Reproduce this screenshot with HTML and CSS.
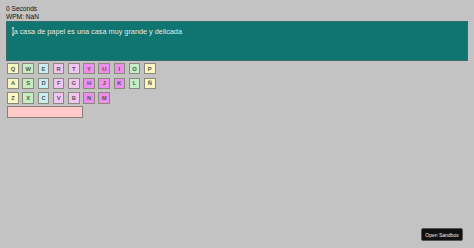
FILE: index.html
```html
<!DOCTYPE html>
<html>
<head>
<meta charset="utf-8">
<link rel="stylesheet" href="styles.css">
</head>
<body>
<div class="stats">
  <div>0 Seconds</div>
  <div>WPM: NaN</div>
</div>
<div class="text-box"><span class="cursor">l</span>a casa de papel es una casa muy grande y delicada</div>
<div class="keyboard">
  <div class="row">
    <div class="key pinky">Q</div><div class="key ring">W</div><div class="key middle">E</div><div class="key index-l">R</div><div class="key index-l">T</div><div class="key index-r">Y</div><div class="key index-r">U</div><div class="key index-r">I</div><div class="key ring-r">O</div><div class="key pinky">P</div>
  </div>
  <div class="row">
    <div class="key pinky">A</div><div class="key ring">S</div><div class="key middle">D</div><div class="key index-l">F</div><div class="key index-l">G</div><div class="key index-r">H</div><div class="key index-r">J</div><div class="key index-r">K</div><div class="key ring-r">L</div><div class="key pinky">Ñ</div>
  </div>
  <div class="row">
    <div class="key pinky">Z</div><div class="key ring">X</div><div class="key middle">C</div><div class="key index-l">V</div><div class="key index-l">B</div><div class="key index-r">N</div><div class="key index-r">M</div>
  </div>
  <div class="input-bar"></div>
</div>
<div class="sandbox-btn">Open Sandbox</div>
</body>
</html>
```
FILE: styles.css
```css
html, body {
  background: #c3c3c3;
}
body {
  margin: 5px 6px;
  font-family: "Liberation Sans", Arial, sans-serif;
  font-size: 6.6px;
  color: #111;
}
.stats {
  line-height: 8px;
}
.text-box {
  box-sizing: border-box;
  height: 40px;
  width: 462px;
  background: #0e7570;
  border: 1px solid #3d6b69;
  color: #e4eaea;
  font-size: 7.3px;
  padding: 5px 5px;
  line-height: 9px;
}
.cursor {
  background: #a9c0be;
  color: #0e7570;
}
.keyboard {
  margin-top: 2px;
  margin-left: 1.3px;
  display: flex;
  flex-direction: column;
  gap: 3.3px;
}
.row {
  display: flex;
  gap: 3.6px;
}
.key {
  box-sizing: border-box;
  width: 11.6px;
  height: 11.4px;
  border: 1px solid #8a8a7a;
  display: flex;
  align-items: center;
  justify-content: center;
  font-size: 5.8px;
  font-weight: bold;
  color: #555;
}
.pinky { background: #f8f8c0; }
.ring { background: #c6eec0; }
.middle { background: #c8eef2; }
.index-l { background: #f2c6f2; }
.index-r { background: #ee8eee; }
.ring-r { background: #c6eec4; }
.input-bar {
  box-sizing: border-box;
  width: 75.4px;
  height: 12px;
  background: #ffcaca;
  border: 1px solid #8c7c7c;
  margin-top: -1px;
}
.sandbox-btn {
  position: fixed;
  right: 11px;
  bottom: 7px;
  box-sizing: border-box;
  width: 42px;
  height: 13px;
  background: #111;
  border: 1px solid #555;
  border-radius: 2px;
  color: #eee;
  font-size: 5px;
  display: flex;
  align-items: center;
  justify-content: center;
}
```
